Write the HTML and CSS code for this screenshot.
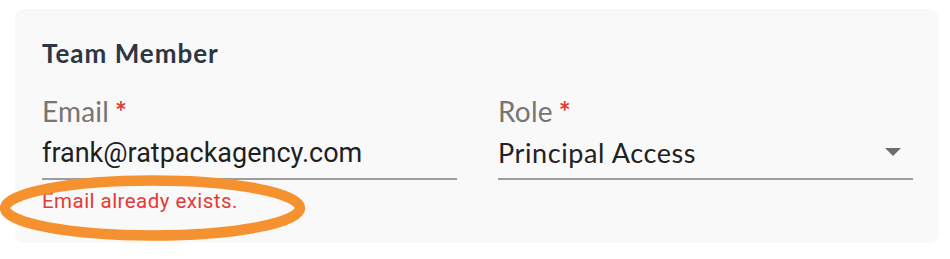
FILE: index.html
```html
<!DOCTYPE html>
<html lang="en">
<head>
<meta charset="utf-8">
<title>Team Member</title>
<link rel="stylesheet" href="styles.css">
</head>
<body>
<div class="page">
  <section class="card">
    <h2 class="card-title">Team Member</h2>
    <div class="fields">
      <div class="field">
        <label class="field-label">Email<span class="req">*</span></label>
        <div class="field-input">
          <span class="input-value">frank@ratpackagency.com</span>
        </div>
        <div class="field-error">Email already exists.</div>
      </div>
      <div class="field">
        <label class="field-label">Role<span class="req">*</span></label>
        <div class="field-input select">
          <span class="select-value">Principal Access</span>
          <svg class="caret" width="16" height="8" viewBox="0 0 16 8"><path d="M0 0H16L8 8Z" fill="#6e6e6e"/></svg>
        </div>
      </div>
    </div>
  </section>
  <svg class="annotation" width="312" height="80" viewBox="0 0 312 80">
    <ellipse cx="152.5" cy="39" rx="147.5" ry="27.5" fill="none" stroke="#f5912f" stroke-width="10.5"/>
  </svg>
</div>
</body>
</html>
```
FILE: styles.css
```css
html, body {
  margin: 0;
  padding: 0;
  background: #ffffff;
}
.page {
  position: relative;
  width: 950px;
  height: 259px;
}
.card {
  margin: 9px 0 0 15px;
  width: 924px;
  height: 234px;
  box-sizing: border-box;
  padding: 29px 26px 0 27px;
  background: #f9f9f9;
  border-radius: 9px;
}
.card-title {
  margin: 0;
  font-family: Lato, "Noto Sans", sans-serif;
  font-weight: 700;
  font-size: 26px;
  line-height: 30px;
  letter-spacing: 1px;
  color: #2f3643;
}
.fields {
  display: grid;
  grid-template-columns: 415px 415px;
  column-gap: 41px;
  margin-top: 26px;
}
.field {
  display: flex;
  flex-direction: column;
}
.field-label {
  font-family: Lato, "Noto Sans", sans-serif;
  font-size: 28px;
  line-height: 34px;
  letter-spacing: 0.2px;
  color: #757575;
}
.req {
  color: #e53935;
  font-weight: 700;
  margin-left: 6px;
}
.field-input {
  margin-top: 9px;
  padding-bottom: 9px;
  border-bottom: 2px solid #9c9c9c;
  display: flex;
  align-items: center;
}
.input-value {
  font-family: Roboto, "Liberation Sans", sans-serif;
  font-size: 27px;
  line-height: 32px;
  color: #1f1f1f;
}
.select-value {
  flex: 1;
  font-family: Lato, "Noto Sans", sans-serif;
  font-size: 27px;
  line-height: 32px;
  letter-spacing: 0.6px;
  color: #222222;
}
.caret {
  margin-right: 12px;
  margin-top: -2px;
}
.field-error {
  margin-top: 9px;
  font-family: Roboto, "Liberation Sans", sans-serif;
  font-size: 20.5px;
  line-height: 24px;
  letter-spacing: 0.45px;
  color: #e53935;
}
.annotation {
  position: absolute;
  left: 0;
  top: 160px;
}
```
